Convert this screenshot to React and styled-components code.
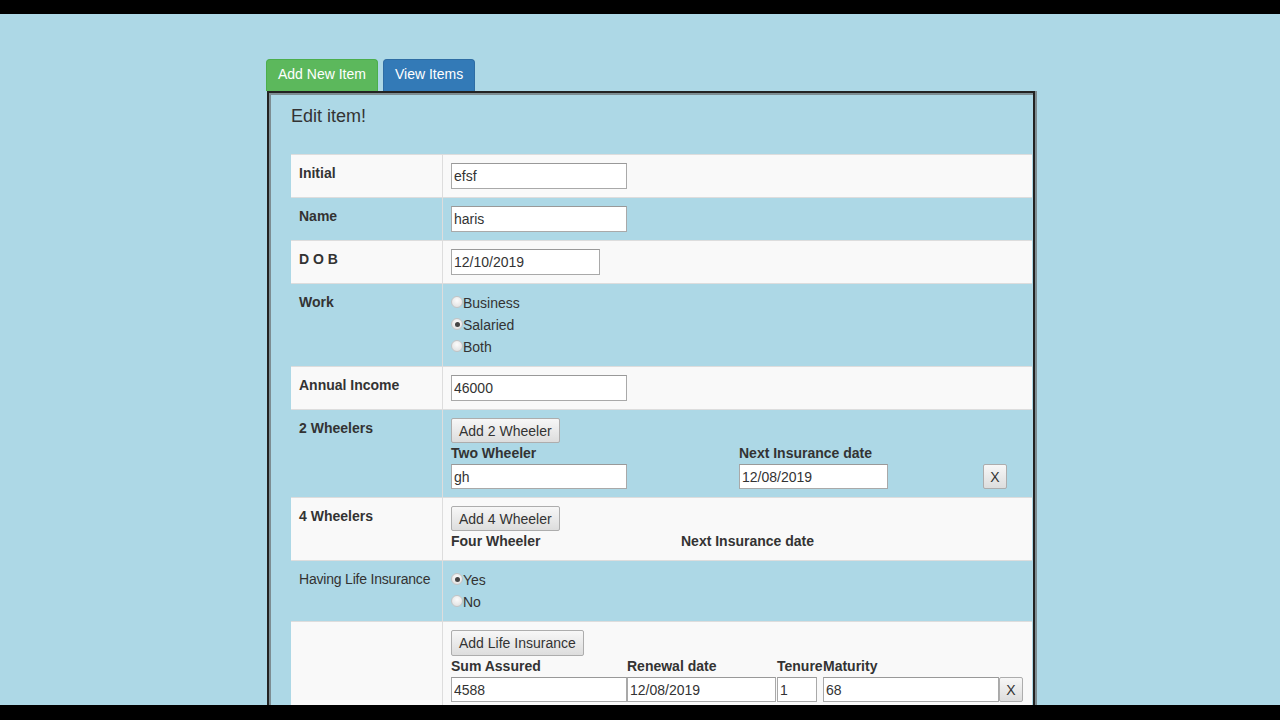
import React from "react";
import styled, { createGlobalStyle } from "styled-components";

const Global = createGlobalStyle`
  html, body { margin: 0; padding: 0; }
  body {
    background: #000;
    font-family: "Liberation Sans", Arial, sans-serif;
    font-size: 14px;
    color: #333;
  }
  * { box-sizing: border-box; }
`;

const Frame = styled.div`
  width: 1280px;
  height: 720px;
  display: flex;
  flex-direction: column;
  overflow: hidden;
`;

const Letterbox = styled.div`
  flex: 0 0 ${(p) => p.$h}px;
  background: #000;
`;

const Stage = styled.main`
  flex: 1;
  background: #add8e6;
  overflow: hidden;
  padding: 45px 0 0 266px;
`;

const Tabs = styled.nav`
  display: flex;
  gap: 5px;
`;

const Tab = styled.button`
  height: 32px;
  padding: 0 11px 3px;
  border: 1px solid ${(p) => (p.$variant === "green" ? "#4cae4c" : "#2e6da4")};
  border-bottom: none;
  border-radius: 4px 4px 0 0;
  background: ${(p) => (p.$variant === "green" ? "#5cb85c" : "#337ab7")};
  color: #fff;
  font-family: "Liberation Sans", Arial, sans-serif;
  font-size: 14px;
  line-height: 20px;
`;

const Panel = styled.section`
  width: 768px;
  margin-left: 1px;
  border: 2px solid #222;
  box-shadow: inset 2px 2px 0 #7d8d92, 2px 0 0 #7d8d92;
  padding: 13px 1px 0 22px;
  min-height: 700px;
`;

const Heading = styled.h4`
  margin: 0 0 28px;
  font-size: 18px;
  line-height: 20px;
  font-weight: normal;
  color: #333;
`;

const Table = styled.div`
  display: grid;
  grid-template-columns: 151px 1fr;
`;

const Cell = styled.div`
  padding: 8px;
  border-top: 1px solid #dddddd;
  background: ${(p) => (p.$odd ? "#f9f9f9" : "transparent")};
  line-height: 20px;
  ${(p) => (p.$value ? "border-left: 1px solid #dddddd;" : "")}
`;

const Label = styled.span`
  font-weight: ${(p) => (p.$plain ? "normal" : "bold")};
  color: #333;
  white-space: nowrap;
  letter-spacing: ${(p) => (p.$plain ? "-0.2px" : "normal")};
`;

const Input = styled.input`
  display: block;
  width: ${(p) => p.$w}px;
  height: ${(p) => p.$h || 25}px;
  padding: 1px 2px;
  border: 1px solid #a9a9a9;
  border-top-color: #999;
  background: #fff;
  font-family: "Liberation Sans", Arial, sans-serif;
  font-size: 14px;
  color: #333;
  outline: none;
`;

const Btn = styled.button`
  height: ${(p) => p.$h || 26}px;
  padding: 0 7px;
  border: 1px solid #adadad;
  border-radius: 2px;
  background: linear-gradient(#f7f7f7, #dddddd);
  color: #333;
  font-family: "Liberation Sans", Arial, sans-serif;
  font-size: 14px;
  line-height: 20px;
`;

const RadioList = styled.div`
  display: flex;
  flex-direction: column;
`;

const RadioRow = styled.label`
  display: flex;
  align-items: center;
  height: 22px;
  color: #333;
`;

const RadioDot = styled.span`
  width: 12px;
  height: 12px;
  margin: 0 0 2px 0;
  border-radius: 50%;
  border: 1px solid #c4c4c4;
  background: radial-gradient(circle at 50% 35%, #fbfbfb, #dcdcdc);
  display: flex;
  align-items: center;
  justify-content: center;
  &::after {
    content: "";
    width: 5px;
    height: 5px;
    border-radius: 50%;
    background: ${(p) => (p.$on ? "#444" : "transparent")};
  }
`;

const Sub = styled.div`
  display: grid;
  grid-template-columns: ${(p) => p.$cols};
  align-items: center;
`;

const SubHead = styled.div`
  font-weight: bold;
  line-height: 20px;
  height: 21px;
  white-space: nowrap;
`;

const XBtn = styled(Btn)`
  width: 24px;
  height: 25px;
  padding: 0;
`;

function Radios({ items, checked }) {
  return (
    <RadioList>
      {items.map((t) => (
        <RadioRow key={t}>
          <RadioDot $on={t === checked} />
          {t}
        </RadioRow>
      ))}
    </RadioList>
  );
}

function Row({ label, odd, plain, children }) {
  return (
    <>
      <Cell $odd={odd}>
        {label && <Label $plain={plain}>{label}</Label>}
      </Cell>
      <Cell $odd={odd} $value>
        {children}
      </Cell>
    </>
  );
}

export default function App() {
  return (
    <Frame>
      <Global />
      <Letterbox $h={14} />
      <Stage>
        <Tabs>
          <Tab $variant="green">Add New Item</Tab>
          <Tab $variant="blue">View Items</Tab>
        </Tabs>
        <Panel>
          <Heading>Edit item!</Heading>
          <Table>
            <Row label="Initial" odd>
              <Input $w={176} $h={26} defaultValue="efsf" />
            </Row>
            <Row label="Name">
              <Input $w={176} $h={26} defaultValue="haris" />
            </Row>
            <Row label="D O B" odd>
              <Input $w={149} $h={26} defaultValue="12/10/2019" />
            </Row>
            <Row label="Work">
              <Radios items={["Business", "Salaried", "Both"]} checked="Salaried" />
            </Row>
            <Row label="Annual Income" odd>
              <Input $w={176} $h={26} defaultValue="46000" />
            </Row>
            <Row label="2 Wheelers">
              <Btn $h={25}>Add 2 Wheeler</Btn>
              <Sub $cols="288px 244px auto">
                <SubHead>Two Wheeler</SubHead>
                <SubHead>Next Insurance date</SubHead>
                <span />
                <Input $w={176} defaultValue="gh" />
                <Input $w={149} defaultValue="12/08/2019" />
                <div>
                  <XBtn>X</XBtn>
                </div>
              </Sub>
            </Row>
            <Row label="4 Wheelers" odd>
              <Btn $h={25}>Add 4 Wheeler</Btn>
              <Sub $cols="230px auto">
                <SubHead>Four Wheeler</SubHead>
                <SubHead>Next Insurance date</SubHead>
              </Sub>
            </Row>
            <Row label="Having Life Insurance" plain>
              <Radios items={["Yes", "No"]} checked="Yes" />
            </Row>
            <Row odd>
              <Btn $h={26}>Add Life Insurance</Btn>
              <Sub $cols="176px 150px 46px 176px auto">
                <SubHead>Sum Assured</SubHead>
                <SubHead>Renewal date</SubHead>
                <SubHead>Tenure</SubHead>
                <SubHead>Maturity</SubHead>
                <span />
                <Input $w={176} defaultValue="4588" />
                <Input $w={149} defaultValue="12/08/2019" />
                <Input $w={40} defaultValue="1" />
                <Input $w={176} defaultValue="68" />
                <XBtn>X</XBtn>
              </Sub>
            </Row>
          </Table>
        </Panel>
      </Stage>
      <Letterbox $h={15} />
    </Frame>
  );
}
